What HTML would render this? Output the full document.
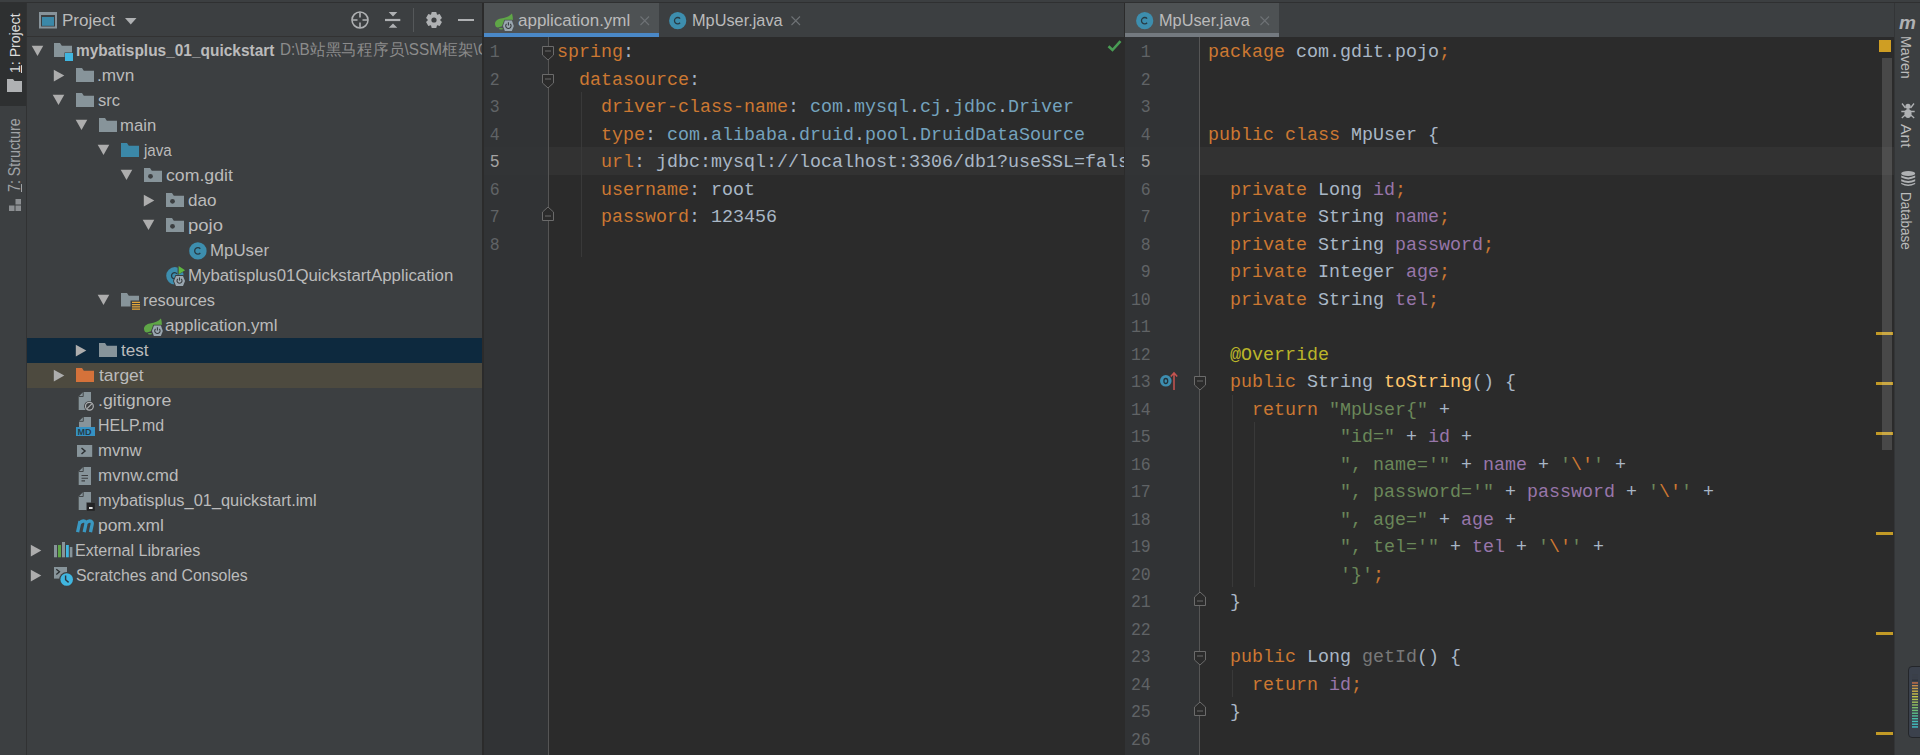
<!DOCTYPE html><html><head><meta charset="utf-8"><style>
*{margin:0;padding:0;box-sizing:border-box}
html,body{width:1920px;height:755px;overflow:hidden;background:#3c3f41}
body{position:relative;font-family:"Liberation Sans",sans-serif}
.abs{position:absolute}
svg{position:absolute;overflow:visible}
.lbl{position:absolute;font-family:"Liberation Sans",sans-serif;font-size:16px;color:#bbbbbb;white-space:pre;line-height:25px;height:25px;transform-origin:0 0}
.code{position:absolute;font-family:"Liberation Mono",monospace;font-size:18.33px;white-space:pre;line-height:27.5px;color:#a9b7c6}
.lnum{position:absolute;font-family:"Liberation Mono",monospace;font-size:18.33px;white-space:pre;line-height:27.5px;color:#606366;text-align:right;transform-origin:100% 0;transform:scaleX(0.9)}
.k{color:#cc7832}.d{color:#a9b7c6}.s{color:#6a8759}.f{color:#9876aa}.a{color:#bbb529}.m{color:#ffc66d}.g{color:#787878}.b{color:#74a2bd}
</style></head><body>
<div class="abs" style="left:0px;top:2px;width:1920px;height:1px;background:#2f3031;"></div>
<div class="abs" style="left:0px;top:3px;width:26px;height:103px;background:#2e3031;"></div>
<div class="abs" style="left:26px;top:3px;width:1px;height:752px;background:#313233;"></div>
<div class="abs" style="left:27px;top:36px;width:455px;height:1px;background:#323232;"></div>
<div class="abs" style="left:482px;top:3px;width:2px;height:752px;background:#2b2b2b;"></div>
<div class="abs" style="left:484px;top:3px;width:640px;height:34px;background:#3c3f41;"></div>
<div class="abs" style="left:484px;top:37px;width:640px;height:718px;background:#2b2b2b;"></div>
<div class="abs" style="left:484px;top:37px;width:64px;height:718px;background:#313335;"></div>
<div class="abs" style="left:1124px;top:3px;width:1px;height:752px;background:#2b2b2b;"></div>
<div class="abs" style="left:1125px;top:3px;width:769px;height:34px;background:#3c3f41;"></div>
<div class="abs" style="left:1125px;top:37px;width:769px;height:718px;background:#2b2b2b;"></div>
<div class="abs" style="left:1125px;top:37px;width:74px;height:718px;background:#313335;"></div>
<div class="abs" style="left:1894px;top:3px;width:1px;height:752px;background:#333537;"></div>
<div class="abs" style="left:7px;top:12px;transform-origin:0 0;transform:rotate(-90deg) translateX(-61px) scaleX(0.94);font-size:15px;color:#dcdcdc;white-space:pre;line-height:15px"><u style="text-decoration-thickness:1px;text-underline-offset:1px">1</u>: Project</div>
<svg style="left:7px;top:79px" width="15" height="13"><path d="M0 0H6L7.5 2H15V13H0Z" fill="#afb1b3"/></svg>
<div class="abs" style="left:7px;top:111px;transform-origin:0 0;transform:rotate(-90deg) translateX(-81px) scaleX(0.89);font-size:16px;color:#a0a3a6;white-space:pre;line-height:15px"><u style="text-decoration-thickness:1px;text-underline-offset:1px">7</u>: Structure</div>
<svg style="left:8.7px;top:199px" width="13" height="13"><rect x="6.5" y="0" width="5.5" height="5.5" fill="#8c8f92"/><rect x="0" y="6.5" width="5.5" height="5.5" fill="#8c8f92"/><rect x="6.5" y="6.5" width="5.5" height="5.5" fill="#8c8f92"/></svg>
<svg style="left:39px;top:12px" width="18" height="17"><rect x="0" y="0" width="18" height="16.5" fill="#87939a"/><rect x="2" y="3" width="14" height="11.5" fill="#3c3f41"/><rect x="3" y="5" width="12" height="8.8" fill="#3b88a8"/></svg>
<div class="lbl" id="L_proj" style="left:62.25px;top:8px;color:#bbbbbb;font-weight:normal;font-size:15.5px;transform-origin:0 18px;transform:scale(1.0960,1.09)">Project</div>
<svg style="left:125px;top:18px" width="12" height="7"><path d="M0 0H11.5L5.75 6.6Z" fill="#afb1b3"/></svg>
<svg style="left:351px;top:11px" width="18" height="18"><circle cx="9" cy="9" r="8" fill="none" stroke="#afb1b3" stroke-width="1.6"/><path d="M9 1.5V6.5M9 11.5V16.5M1.5 9H6.5M11.5 9H16.5" stroke="#afb1b3" stroke-width="1.6"/></svg>
<svg style="left:385px;top:12px" width="16" height="16"><path d="M3.7 0H12.3L8 4.5Z M3.7 15.8H12.3L8 11.4Z" fill="#afb1b3"/><rect x="0" y="6.9" width="15.3" height="2.2" fill="#afb1b3"/></svg>
<div class="abs" style="left:413px;top:8px;width:1px;height:24px;background:#55585a;"></div>
<svg style="left:425px;top:11px" width="18" height="18"><path d="M6.03 3.56 L6.73 1.12 L11.27 1.12 L11.97 3.56 L12.23 3.71 L14.69 3.10 L16.96 7.02 L15.20 8.85 L15.20 9.15 L16.96 10.98 L14.69 14.90 L12.23 14.29 L11.97 14.44 L11.27 16.88 L6.73 16.88 L6.03 14.44 L5.77 14.29 L3.31 14.90 L1.04 10.98 L2.80 9.15 L2.80 8.85 L1.04 7.02 L3.31 3.10 L5.77 3.71Z" fill="#afb1b3"/><circle cx="9" cy="9" r="2.6" fill="#3c3f41"/></svg>
<div class="abs" style="left:458px;top:19px;width:16px;height:2px;background:#afb1b3;"></div>
<div class="abs" style="left:27px;top:338px;width:455px;height:25px;background:#0d293e;"></div>
<div class="abs" style="left:27px;top:363px;width:455px;height:25px;background:#4d4a3f;"></div>
<svg style="left:31.5px;top:45.5px" width="13" height="11"><path d="M-0.3 -0.2H11.3L5.5 10Z" fill="#adadad"/></svg>
<svg style="left:54px;top:43px" width="20" height="19"><path d="M0 0H6L7.8 2.8H18V14H0Z" fill="#87949a"/><rect x="10.5" y="9.5" width="9" height="9" fill="#3c3f41"/><rect x="11" y="10" width="8" height="8" fill="#40b6e0"/></svg>
<div class="lbl" id="L_root" style="left:75.50px;top:38px;color:#bbbbbb;font-weight:bold;font-size:15.5px;transform-origin:0 18px;transform:scale(0.9970,1.09)">mybatisplus_01_quickstart</div>
<div class="abs" style="left:0;top:0;width:482px;height:100px;overflow:hidden">
<div class="lbl" id="L_path" style="left:279.72px;top:38px;color:#8c8c8c;font-weight:normal;font-size:14.5px;transform-origin:0 18px;transform:scale(1.0535,1.09)">D:\B站黑马程序员\SSM框架\Code</div>
</div>
<svg style="left:54.0px;top:69.5px" width="12" height="13"><path d="M-0.2 -0.3L10.3 5.6L-0.2 11.6Z" fill="#adadad"/></svg>
<svg style="left:76.3px;top:67.9px" width="18" height="14"><path d="M0 0H6L7.8 2.8H18V14H0Z" fill="#87949a"/></svg>
<div class="lbl" id="L_mvn" style="left:97.46px;top:63px;color:#bbbbbb;font-weight:normal;font-size:15.5px;transform-origin:0 18px;transform:scale(1.1093,1.09)">.mvn</div>
<svg style="left:53.2px;top:95px" width="13" height="11"><path d="M-0.3 -0.2H11.3L5.5 10Z" fill="#adadad"/></svg>
<svg style="left:76.3px;top:92.9px" width="18" height="14"><path d="M0 0H6L7.8 2.8H18V14H0Z" fill="#87949a"/></svg>
<div class="lbl" id="L_src" style="left:98.29px;top:88px;color:#bbbbbb;font-weight:normal;font-size:15.5px;transform-origin:0 18px;transform:scale(1.0689,1.09)">src</div>
<svg style="left:75.7px;top:120px" width="13" height="11"><path d="M-0.3 -0.2H11.3L5.5 10Z" fill="#adadad"/></svg>
<svg style="left:98.8px;top:117.9px" width="18" height="14"><path d="M0 0H6L7.8 2.8H18V14H0Z" fill="#87949a"/></svg>
<div class="lbl" id="L_main" style="left:120.42px;top:113px;color:#bbbbbb;font-weight:normal;font-size:15.5px;transform-origin:0 18px;transform:scale(1.0766,1.09)">main</div>
<svg style="left:98.2px;top:145px" width="13" height="11"><path d="M-0.3 -0.2H11.3L5.5 10Z" fill="#adadad"/></svg>
<svg style="left:121.3px;top:142.9px" width="18" height="14"><path d="M0 0H6L7.8 2.8H18V14H0Z" fill="#3b88a8"/></svg>
<div class="lbl" id="L_java" style="left:144.41px;top:138px;color:#bbbbbb;font-weight:normal;font-size:15.5px;transform-origin:0 18px;transform:scale(0.9778,1.09)">java</div>
<svg style="left:120.7px;top:170px" width="13" height="11"><path d="M-0.3 -0.2H11.3L5.5 10Z" fill="#adadad"/></svg>
<svg style="left:143.8px;top:167.9px" width="18" height="14"><path d="M0 0H6L7.8 2.8H18V14H0Z" fill="#87949a"/><circle cx="6.5" cy="8.3" r="2.4" fill="#3c3f41"/></svg>
<div class="lbl" id="L_comgdit" style="left:165.68px;top:163px;color:#bbbbbb;font-weight:normal;font-size:15.5px;transform-origin:0 18px;transform:scale(1.1402,1.09)">com.gdit</div>
<svg style="left:144.0px;top:194.5px" width="12" height="13"><path d="M-0.2 -0.3L10.3 5.6L-0.2 11.6Z" fill="#adadad"/></svg>
<svg style="left:166.3px;top:192.9px" width="18" height="14"><path d="M0 0H6L7.8 2.8H18V14H0Z" fill="#87949a"/><circle cx="6.5" cy="8.3" r="2.4" fill="#3c3f41"/></svg>
<div class="lbl" id="L_dao" style="left:188.30px;top:188px;color:#bbbbbb;font-weight:normal;font-size:15.5px;transform-origin:0 18px;transform:scale(1.1011,1.09)">dao</div>
<svg style="left:143.2px;top:220px" width="13" height="11"><path d="M-0.3 -0.2H11.3L5.5 10Z" fill="#adadad"/></svg>
<svg style="left:166.3px;top:217.9px" width="18" height="14"><path d="M0 0H6L7.8 2.8H18V14H0Z" fill="#87949a"/><circle cx="6.5" cy="8.3" r="2.4" fill="#3c3f41"/></svg>
<div class="lbl" id="L_pojo" style="left:187.66px;top:213px;color:#bbbbbb;font-weight:normal;font-size:15.5px;transform-origin:0 18px;transform:scale(1.1923,1.09)">pojo</div>
<svg style="left:189px;top:242px" width="18" height="18"><circle cx="8.9" cy="8.9" r="8.7" fill="#3d8eae"/><path d="M11.3 6.8A3.2 3.2 0 1 0 11.3 11" fill="none" stroke="#283b44" stroke-width="1.3"/></svg>
<div class="lbl" id="L_mpuser" style="left:209.91px;top:238px;color:#bbbbbb;font-weight:normal;font-size:15.5px;transform-origin:0 18px;transform:scale(1.0876,1.09)">MpUser</div>
<svg style="left:166px;top:266px" width="22" height="22"><circle cx="8.9" cy="9.8" r="8.7" fill="#3d8eae"/><path d="M11 7.8A3.1 3.1 0 1 0 11 11.8" fill="none" stroke="#283b44" stroke-width="1.3"/><path d="M11.6 -0.6L20.2 4.15L11.6 8.9Z" fill="#3c3f41"/><path d="M12.6 0L19.1 4.15L12.6 8.3Z" fill="#5fb641"/><path d="M7 15L9.4 9H17.6L20 15L17.6 21H9.4Z" fill="#3c3f41"/><path d="M8 15L10 10H17L19 15L17 20H10Z" fill="#9aa7b0"/><path d="M11.8 12.9A2.5 2.5 0 1 0 15.2 12.9" fill="none" stroke="#3a3d40" stroke-width="1.1"/><path d="M13.5 11.4V14.6" stroke="#3a3d40" stroke-width="1.1"/></svg>
<div class="lbl" id="L_app" style="left:188.18px;top:263px;color:#bbbbbb;font-weight:normal;font-size:15.5px;transform-origin:0 18px;transform:scale(1.0841,1.09)">Mybatisplus01QuickstartApplication</div>
<svg style="left:98.2px;top:295px" width="13" height="11"><path d="M-0.3 -0.2H11.3L5.5 10Z" fill="#adadad"/></svg>
<svg style="left:121px;top:293.4px" width="20" height="19"><path d="M0 0H6L7.8 2.8H18V13.4H0Z" fill="#87949a"/><rect x="9.5" y="7.5" width="10" height="11" fill="#3c3f41"/><path d="M11 9.3H19M11 11.6H19M11 13.9H19M11 16.2H19" stroke="#e5a83b" stroke-width="1.3"/></svg>
<div class="lbl" id="L_resources" style="left:143.13px;top:288px;color:#bbbbbb;font-weight:normal;font-size:15.5px;transform-origin:0 18px;transform:scale(1.0570,1.09)">resources</div>
<svg style="left:138.8px;top:315.4px" width="26" height="24"><path d="M21.9 3.5C19 6.5 16 7.6 11 8.4C7 9 4.8 11.5 5 14C5.2 16.5 6.5 17.6 8 17.5L13 16L22.9 9.9C22.9 7.5 22.5 5 21.9 3.5Z" fill="#5fa647"/><ellipse cx="11" cy="18.7" rx="2.2" ry="0.8" fill="#5fa647"/><path d="M12 15.9L14.3 9.8H22.5L24.8 15.9L22.5 21.8H14.3Z" fill="#3c3f41"/><path d="M13 15.9L14.9 10.6H21.9L23.8 15.9L21.9 21H14.9Z" fill="#9aa7b0"/><path d="M16.6 13.8A2.7 2.7 0 1 0 20.2 13.8" fill="none" stroke="#3a3d40" stroke-width="1.1"/><path d="M18.4 12.2V15.6" stroke="#3a3d40" stroke-width="1.1"/></svg>
<div class="lbl" id="L_appyml" style="left:165.31px;top:313px;color:#bbbbbb;font-weight:normal;font-size:15.5px;transform-origin:0 18px;transform:scale(1.0978,1.09)">application.yml</div>
<svg style="left:75.8px;top:344.5px" width="12" height="13"><path d="M-0.2 -0.3L10.3 5.6L-0.2 11.6Z" fill="#adadad"/></svg>
<svg style="left:98.8px;top:342.9px" width="18" height="14"><path d="M0 0H6L7.8 2.8H18V14H0Z" fill="#87949a"/></svg>
<div class="lbl" id="L_test" style="left:121.03px;top:338px;color:#bbbbbb;font-weight:normal;font-size:15.5px;transform-origin:0 18px;transform:scale(1.1059,1.09)">test</div>
<svg style="left:54px;top:369.5px" width="12" height="13"><path d="M-0.2 -0.3L10.3 5.6L-0.2 11.6Z" fill="#adadad"/></svg>
<svg style="left:75.8px;top:367.9px" width="18" height="14"><path d="M0 0H6L7.8 2.8H18V14H0Z" fill="#d5723a"/></svg>
<div class="lbl" id="L_target" style="left:99.02px;top:363px;color:#bbbbbb;font-weight:normal;font-size:15.5px;transform-origin:0 18px;transform:scale(1.1269,1.09)">target</div>
<svg style="left:78px;top:392px" width="18" height="20"><path d="M5.2 0H13.0V18H0.7V4.5Z" fill="#87949a"/><path d="M5.2 0V4.5H0.7" fill="none" stroke="#3c3f41" stroke-width="0.9"/><circle cx="11.4" cy="14.2" r="5.3" fill="#3c3f41"/><circle cx="11.4" cy="14.2" r="3.9" fill="none" stroke="#afb1b3" stroke-width="1.2"/><path d="M9 16.6L13.8 11.8" stroke="#afb1b3" stroke-width="1.2"/></svg>
<div class="lbl" id="L_gitignore" style="left:97.66px;top:388px;color:#bbbbbb;font-weight:normal;font-size:15.5px;transform-origin:0 18px;transform:scale(1.1493,1.09)">.gitignore</div>
<svg style="left:76px;top:416.5px" width="20" height="20"><path d="M7.3 0H15V10H3V4.3Z" fill="#87949a"/><path d="M7.3 0V4.3H3" fill="none" stroke="#3c3f41" stroke-width="0.9"/><rect x="0" y="10" width="19" height="9" fill="#3592c4"/><text x="1.5" y="17.6" font-family="Liberation Sans" font-size="9" font-weight="bold" fill="#263b48">MD</text></svg>
<div class="lbl" id="L_help" style="left:97.98px;top:413px;color:#bbbbbb;font-weight:normal;font-size:15.5px;transform-origin:0 18px;transform:scale(1.0276,1.09)">HELP.md</div>
<svg style="left:77.4px;top:444.8px" width="16" height="13"><rect x="0" y="0" width="15.2" height="11.9" fill="#87949a"/><path d="M4.5 3L8 6L4.5 9" fill="none" stroke="#2b2f31" stroke-width="1.5"/></svg>
<div class="lbl" id="L_mvnw" style="left:98.11px;top:438px;color:#bbbbbb;font-weight:normal;font-size:15.5px;transform-origin:0 18px;transform:scale(1.0797,1.09)">mvnw</div>
<svg style="left:78px;top:467px" width="16" height="20"><path d="M5.2 0H13.0V18H0.7V4.5Z" fill="#87949a"/><path d="M5.2 0V4.5H0.7" fill="none" stroke="#3c3f41" stroke-width="0.9"/><path d="M3.5 8.5H10M3.5 11.2H10M3.5 13.9H7" stroke="#3c3f41" stroke-width="1.1"/></svg>
<div class="lbl" id="L_mvnwcmd" style="left:98.09px;top:463px;color:#bbbbbb;font-weight:normal;font-size:15.5px;transform-origin:0 18px;transform:scale(1.0977,1.09)">mvnw.cmd</div>
<svg style="left:78px;top:491.8px" width="18" height="20"><path d="M5.2 0H13.0V18H0.7V4.5Z" fill="#87949a"/><path d="M5.2 0V4.5H0.7" fill="none" stroke="#3c3f41" stroke-width="0.9"/><rect x="8.4" y="10.4" width="8.4" height="8.4" fill="#3c3f41"/><rect x="9" y="11" width="7.8" height="7.8" fill="#232425"/><rect x="11" y="15" width="3.6" height="2" fill="#dddddd"/></svg>
<div class="lbl" id="L_iml" style="left:98.13px;top:488px;color:#bbbbbb;font-weight:normal;font-size:15.5px;transform-origin:0 18px;transform:scale(1.0575,1.09)">mybatisplus_01_quickstart.iml</div>
<svg style="left:76.3px;top:520.1px" width="20" height="14"><path d="M1.6 12.2L4 1M3.6 3.2Q6 0.2 8.9 1.3Q10.4 2.2 9.8 4.6L8.2 12.2M9.9 3.2Q12.3 0.2 15.2 1.3Q16.7 2.2 16.1 4.6L14.5 12.2" fill="none" stroke="#3a98c2" stroke-width="3.3"/></svg>
<div class="lbl" id="L_pom" style="left:98.08px;top:513px;color:#bbbbbb;font-weight:normal;font-size:15.5px;transform-origin:0 18px;transform:scale(1.1235,1.09)">pom.xml</div>
<svg style="left:31px;top:544.5px" width="12" height="13"><path d="M-0.2 -0.3L10.3 5.6L-0.2 11.6Z" fill="#adadad"/></svg>
<svg style="left:54px;top:542px" width="19" height="16"><rect x="0" y="3" width="3" height="12.3" fill="#87949a"/><rect x="4" y="3" width="3" height="12.3" fill="#5fa647"/><rect x="8" y="0" width="3" height="15.3" fill="#87949a"/><rect x="12" y="3" width="2.8" height="12.3" fill="#40b6e0"/><rect x="15.8" y="5" width="2.6" height="10.3" fill="#87949a"/></svg>
<div class="lbl" id="L_extlib" style="left:75.23px;top:538px;color:#bbbbbb;font-weight:normal;font-size:15.5px;transform-origin:0 18px;transform:scale(1.0390,1.09)">External Libraries</div>
<svg style="left:31px;top:569.5px" width="12" height="13"><path d="M-0.2 -0.3L10.3 5.6L-0.2 11.6Z" fill="#adadad"/></svg>
<svg style="left:54px;top:567px" width="20" height="20"><rect x="0" y="0" width="13" height="11.6" fill="#87949a"/><path d="M2.3 2.2L5.5 4.8L2.3 7.4" fill="none" stroke="#2b2f31" stroke-width="1.3"/><circle cx="12.7" cy="12.5" r="7.5" fill="#3c3f41"/><circle cx="12.7" cy="12.5" r="6.3" fill="#40b6e0"/><path d="M11.6 8.6V12.8L14.6 15.4" fill="none" stroke="#2b3640" stroke-width="1.4"/></svg>
<div class="lbl" id="L_scratch" style="left:75.59px;top:563px;color:#bbbbbb;font-weight:normal;font-size:15.5px;transform-origin:0 18px;transform:scale(1.0216,1.09)">Scratches and Consoles</div>
<div class="abs" style="left:484px;top:3px;width:175px;height:30px;background:#4e5254;"></div>
<div class="abs" style="left:484px;top:33px;width:175px;height:4px;background:#4a88c7;"></div>
<svg style="left:490px;top:10px" width="26" height="24"><path d="M21.9 3.5C19 6.5 16 7.6 11 8.4C7 9 4.8 11.5 5 14C5.2 16.5 6.5 17.6 8 17.5L13 16L22.9 9.9C22.9 7.5 22.5 5 21.9 3.5Z" fill="#5fa647"/><ellipse cx="11" cy="18.7" rx="2.2" ry="0.8" fill="#5fa647"/><path d="M12 15.9L14.3 9.8H22.5L24.8 15.9L22.5 21.8H14.3Z" fill="#4e5254"/><path d="M13 15.9L14.9 10.6H21.9L23.8 15.9L21.9 21H14.9Z" fill="#9aa7b0"/><path d="M16.6 13.8A2.7 2.7 0 1 0 20.2 13.8" fill="none" stroke="#3a3d40" stroke-width="1.1"/><path d="M18.4 12.2V15.6" stroke="#3a3d40" stroke-width="1.1"/></svg>
<div class="lbl" id="L_tab_yml" style="left:518.41px;top:8px;color:#bbbbbb;font-weight:normal;font-size:15.5px;transform-origin:0 18px;transform:scale(1.0948,1.09)">application.yml</div>
<svg style="left:640px;top:15.5px" width="10" height="10"><path d="M0.5 0.5L9 9M9 0.5L0.5 9" stroke="#6e7275" stroke-width="1.1"/></svg>
<svg style="left:669px;top:12.3px" width="18" height="18"><circle cx="8.7" cy="8.7" r="8.6" fill="#3d8eae"/><path d="M11.1 6.6A3.2 3.2 0 1 0 11.1 10.8" fill="none" stroke="#283b44" stroke-width="1.3"/></svg>
<div class="lbl" id="L_tab_mp1" style="left:692.22px;top:8px;color:#bbbbbb;font-weight:normal;font-size:15.5px;transform-origin:0 18px;transform:scale(1.0522,1.09)">MpUser.java</div>
<svg style="left:791px;top:15.5px" width="10" height="10"><path d="M0.5 0.5L9 9M9 0.5L0.5 9" stroke="#6e7275" stroke-width="1.1"/></svg>
<svg style="left:1107px;top:39px" width="16" height="14"><path d="M1.5 7.2L5.5 11L13.5 2.2" fill="none" stroke="#499c54" stroke-width="2.6"/></svg>
<div class="abs" style="left:1125px;top:3px;width:154px;height:30px;background:#4e5254;"></div>
<div class="abs" style="left:1125px;top:33px;width:154px;height:4px;background:#747a80;"></div>
<svg style="left:1136.4px;top:12.3px" width="18" height="18"><circle cx="8.7" cy="8.7" r="8.6" fill="#3d8eae"/><path d="M11.1 6.6A3.2 3.2 0 1 0 11.1 10.8" fill="none" stroke="#283b44" stroke-width="1.3"/></svg>
<div class="lbl" id="L_tab_mp2" style="left:1159.05px;top:8px;color:#bbbbbb;font-weight:normal;font-size:15.5px;transform-origin:0 18px;transform:scale(1.0531,1.09)">MpUser.java</div>
<svg style="left:1260px;top:15.5px" width="10" height="10"><path d="M0.5 0.5L9 9M9 0.5L0.5 9" stroke="#6e7275" stroke-width="1.1"/></svg>
<div class="abs" style="left:484px;top:147.0px;width:64px;height:27.5px;background:#323436;"></div>
<div class="abs" style="left:549px;top:147.0px;width:575px;height:27.5px;background:#323232;"></div>
<div class="abs" style="left:548px;top:37px;width:1px;height:718px;background:#555555;"></div>
<div class="abs" style="left:581px;top:92.0px;width:1px;height:165.0px;background:#393939;"></div>
<div class="abs" style="left:549px;top:37px;width:575px;height:718px;overflow:hidden">
<div class="code" style="left:8px;top:2.2px"><span class="k">spring</span>:</div>
<div class="code" style="left:8px;top:29.7px">  <span class="k">datasource</span>:</div>
<div class="code" style="left:8px;top:57.2px">    <span class="k">driver-class-name</span>: <span class="b">com</span>.<span class="b">mysql</span>.<span class="b">cj</span>.<span class="b">jdbc</span>.<span class="b">Driver</span></div>
<div class="code" style="left:8px;top:84.7px">    <span class="k">type</span>: <span class="b">com</span>.<span class="b">alibaba</span>.<span class="b">druid</span>.<span class="b">pool</span>.<span class="b">DruidDataSource</span></div>
<div class="code" style="left:8px;top:112.2px">    <span class="k">url</span>: jdbc:mysql://localhost:3306/db1?useSSL=false</div>
<div class="code" style="left:8px;top:139.7px">    <span class="k">username</span>: root</div>
<div class="code" style="left:8px;top:167.2px">    <span class="k">password</span>: 123456</div>
<div class="code" style="left:8px;top:194.7px"></div>
</div>
<div class="lnum" style="left:460px;width:39.69999999999999px;top:39.2px;color:#606366">1</div>
<div class="lnum" style="left:460px;width:39.69999999999999px;top:66.7px;color:#606366">2</div>
<div class="lnum" style="left:460px;width:39.69999999999999px;top:94.2px;color:#606366">3</div>
<div class="lnum" style="left:460px;width:39.69999999999999px;top:121.7px;color:#606366">4</div>
<div class="lnum" style="left:460px;width:39.69999999999999px;top:149.2px;color:#a4a3a3">5</div>
<div class="lnum" style="left:460px;width:39.69999999999999px;top:176.7px;color:#606366">6</div>
<div class="lnum" style="left:460px;width:39.69999999999999px;top:204.2px;color:#606366">7</div>
<div class="lnum" style="left:460px;width:39.69999999999999px;top:231.7px;color:#606366">8</div>
<svg style="left:542px;top:46px" width="13" height="15"><path d="M0.5 0.5H11.5V9L6 14L0.5 9Z" fill="#2b2b2b" stroke="#6b6b6b" stroke-width="1"/><path d="M3 5H9" stroke="#6b6b6b" stroke-width="1"/></svg>
<svg style="left:542px;top:73.5px" width="13" height="15"><path d="M0.5 0.5H11.5V9L6 14L0.5 9Z" fill="#2b2b2b" stroke="#6b6b6b" stroke-width="1"/><path d="M3 5H9" stroke="#6b6b6b" stroke-width="1"/></svg>
<svg style="left:542px;top:205.8px" width="13" height="15"><path d="M0.5 14.5H11.5V6L6 1L0.5 6Z" fill="#2b2b2b" stroke="#6b6b6b" stroke-width="1"/><path d="M3 10H9" stroke="#6b6b6b" stroke-width="1"/></svg>
<div class="abs" style="left:1125px;top:147.0px;width:74px;height:27.5px;background:#323436;"></div>
<div class="abs" style="left:1200px;top:147.0px;width:694px;height:27.5px;background:#323232;"></div>
<div class="abs" style="left:1199px;top:37px;width:1px;height:718px;background:#555555;"></div>
<div class="abs" style="left:1232px;top:394.5px;width:1px;height:192.5px;background:#393939;"></div>
<div class="abs" style="left:1254px;top:422.0px;width:1px;height:165.0px;background:#393939;"></div>
<div class="abs" style="left:1232px;top:669.5px;width:1px;height:27.5px;background:#393939;"></div>
<div class="code" style="left:1208px;top:39.2px"><span class="k">package</span> com.gdit.pojo<span class="k">;</span></div>
<div class="code" style="left:1208px;top:66.7px"></div>
<div class="code" style="left:1208px;top:94.2px"></div>
<div class="code" style="left:1208px;top:121.7px"><span class="k">public class</span> MpUser {</div>
<div class="code" style="left:1208px;top:149.2px"></div>
<div class="code" style="left:1208px;top:176.7px">  <span class="k">private</span> Long <span class="f">id</span><span class="k">;</span></div>
<div class="code" style="left:1208px;top:204.2px">  <span class="k">private</span> String <span class="f">name</span><span class="k">;</span></div>
<div class="code" style="left:1208px;top:231.7px">  <span class="k">private</span> String <span class="f">password</span><span class="k">;</span></div>
<div class="code" style="left:1208px;top:259.2px">  <span class="k">private</span> Integer <span class="f">age</span><span class="k">;</span></div>
<div class="code" style="left:1208px;top:286.7px">  <span class="k">private</span> String <span class="f">tel</span><span class="k">;</span></div>
<div class="code" style="left:1208px;top:314.2px"></div>
<div class="code" style="left:1208px;top:341.7px">  <span class="a">@Override</span></div>
<div class="code" style="left:1208px;top:369.2px">  <span class="k">public</span> String <span class="m">toString</span>() {</div>
<div class="code" style="left:1208px;top:396.7px">    <span class="k">return</span> <span class="s">"MpUser{"</span> +</div>
<div class="code" style="left:1208px;top:424.2px">            <span class="s">"id="</span> + <span class="f">id</span> +</div>
<div class="code" style="left:1208px;top:451.7px">            <span class="s">", name='"</span> + <span class="f">name</span> + <span class="s">'</span><span class="k">\'</span><span class="s">'</span> +</div>
<div class="code" style="left:1208px;top:479.2px">            <span class="s">", password='"</span> + <span class="f">password</span> + <span class="s">'</span><span class="k">\'</span><span class="s">'</span> +</div>
<div class="code" style="left:1208px;top:506.7px">            <span class="s">", age="</span> + <span class="f">age</span> +</div>
<div class="code" style="left:1208px;top:534.2px">            <span class="s">", tel='"</span> + <span class="f">tel</span> + <span class="s">'</span><span class="k">\'</span><span class="s">'</span> +</div>
<div class="code" style="left:1208px;top:561.7px">            <span class="s">'}'</span><span class="k">;</span></div>
<div class="code" style="left:1208px;top:589.2px">  }</div>
<div class="code" style="left:1208px;top:616.7px"></div>
<div class="code" style="left:1208px;top:644.2px">  <span class="k">public</span> Long <span class="g">getId</span>() {</div>
<div class="code" style="left:1208px;top:671.7px">    <span class="k">return</span> <span class="f">id</span><span class="k">;</span></div>
<div class="code" style="left:1208px;top:699.2px">  }</div>
<div class="code" style="left:1208px;top:726.7px"></div>
<div class="lnum" style="left:1100px;width:50.700000000000045px;top:39.2px;color:#606366">1</div>
<div class="lnum" style="left:1100px;width:50.700000000000045px;top:66.7px;color:#606366">2</div>
<div class="lnum" style="left:1100px;width:50.700000000000045px;top:94.2px;color:#606366">3</div>
<div class="lnum" style="left:1100px;width:50.700000000000045px;top:121.7px;color:#606366">4</div>
<div class="lnum" style="left:1100px;width:50.700000000000045px;top:149.2px;color:#a4a3a3">5</div>
<div class="lnum" style="left:1100px;width:50.700000000000045px;top:176.7px;color:#606366">6</div>
<div class="lnum" style="left:1100px;width:50.700000000000045px;top:204.2px;color:#606366">7</div>
<div class="lnum" style="left:1100px;width:50.700000000000045px;top:231.7px;color:#606366">8</div>
<div class="lnum" style="left:1100px;width:50.700000000000045px;top:259.2px;color:#606366">9</div>
<div class="lnum" style="left:1100px;width:50.700000000000045px;top:286.7px;color:#606366">10</div>
<div class="lnum" style="left:1100px;width:50.700000000000045px;top:314.2px;color:#606366">11</div>
<div class="lnum" style="left:1100px;width:50.700000000000045px;top:341.7px;color:#606366">12</div>
<div class="lnum" style="left:1100px;width:50.700000000000045px;top:369.2px;color:#606366">13</div>
<div class="lnum" style="left:1100px;width:50.700000000000045px;top:396.7px;color:#606366">14</div>
<div class="lnum" style="left:1100px;width:50.700000000000045px;top:424.2px;color:#606366">15</div>
<div class="lnum" style="left:1100px;width:50.700000000000045px;top:451.7px;color:#606366">16</div>
<div class="lnum" style="left:1100px;width:50.700000000000045px;top:479.2px;color:#606366">17</div>
<div class="lnum" style="left:1100px;width:50.700000000000045px;top:506.7px;color:#606366">18</div>
<div class="lnum" style="left:1100px;width:50.700000000000045px;top:534.2px;color:#606366">19</div>
<div class="lnum" style="left:1100px;width:50.700000000000045px;top:561.7px;color:#606366">20</div>
<div class="lnum" style="left:1100px;width:50.700000000000045px;top:589.2px;color:#606366">21</div>
<div class="lnum" style="left:1100px;width:50.700000000000045px;top:616.7px;color:#606366">22</div>
<div class="lnum" style="left:1100px;width:50.700000000000045px;top:644.2px;color:#606366">23</div>
<div class="lnum" style="left:1100px;width:50.700000000000045px;top:671.7px;color:#606366">24</div>
<div class="lnum" style="left:1100px;width:50.700000000000045px;top:699.2px;color:#606366">25</div>
<div class="lnum" style="left:1100px;width:50.700000000000045px;top:726.7px;color:#606366">26</div>
<svg style="left:1193.5px;top:376px" width="13" height="15"><path d="M0.5 0.5H11.5V9L6 14L0.5 9Z" fill="#2b2b2b" stroke="#6b6b6b" stroke-width="1"/><path d="M3 5H9" stroke="#6b6b6b" stroke-width="1"/></svg>
<svg style="left:1193.5px;top:591.3px" width="13" height="15"><path d="M0.5 14.5H11.5V6L6 1L0.5 6Z" fill="#2b2b2b" stroke="#6b6b6b" stroke-width="1"/><path d="M3 10H9" stroke="#6b6b6b" stroke-width="1"/></svg>
<svg style="left:1193.5px;top:651px" width="13" height="15"><path d="M0.5 0.5H11.5V9L6 14L0.5 9Z" fill="#2b2b2b" stroke="#6b6b6b" stroke-width="1"/><path d="M3 5H9" stroke="#6b6b6b" stroke-width="1"/></svg>
<svg style="left:1193.5px;top:700.7px" width="13" height="15"><path d="M0.5 14.5H11.5V6L6 1L0.5 6Z" fill="#2b2b2b" stroke="#6b6b6b" stroke-width="1"/><path d="M3 10H9" stroke="#6b6b6b" stroke-width="1"/></svg>
<svg style="left:1159px;top:371px" width="22" height="20"><circle cx="6.8" cy="9.8" r="5.8" fill="#3d8eb0"/><ellipse cx="6.8" cy="10" rx="1.9" ry="2.5" fill="none" stroke="#24333a" stroke-width="1.3"/><path d="M15 19V2M11.8 5.5L15 1.8L18.2 5.5" fill="none" stroke="#c75450" stroke-width="1.5"/></svg>
<div class="abs" style="left:1879px;top:40px;width:12px;height:12px;background:#cf9e23;"></div>
<div class="abs" style="left:1876px;top:332px;width:17px;height:3px;background:#c29a26;"></div>
<div class="abs" style="left:1876px;top:382px;width:17px;height:3px;background:#c29a26;"></div>
<div class="abs" style="left:1876px;top:432px;width:17px;height:3px;background:#c29a26;"></div>
<div class="abs" style="left:1876px;top:532px;width:17px;height:3px;background:#c29a26;"></div>
<div class="abs" style="left:1876px;top:632px;width:17px;height:3px;background:#c29a26;"></div>
<div class="abs" style="left:1876px;top:732px;width:17px;height:3px;background:#c29a26;"></div>
<div class="abs" style="left:1882px;top:58px;width:10px;height:392px;background:rgba(255,255,255,0.14);"></div>
<div class="abs" style="left:1899px;top:15px;font-family:'Liberation Sans';font-size:19px;font-weight:bold;font-style:italic;color:#afb1b3;line-height:16px">m</div>
<div class="abs" style="left:1899px;top:36px;transform-origin:0 0;transform:rotate(90deg) translateY(-14px) scaleX(0.9500);font-size:15px;color:#bbbbbb;white-space:pre;line-height:14px">Maven</div>
<svg style="left:1901px;top:103px" width="15" height="16"><circle cx="7" cy="3.3" r="2.6" fill="#afb1b3"/><ellipse cx="7" cy="10.5" rx="3.6" ry="4.6" fill="#afb1b3"/><path d="M1 0.5L4.5 5M13 0.5L9.5 5M0.3 8.5H4M13.7 8.5H10M0.8 15L4.2 12M13.2 15L9.8 12" stroke="#afb1b3" stroke-width="1.3"/></svg>
<div class="abs" style="left:1899px;top:124.3px;transform-origin:0 0;transform:rotate(90deg) translateY(-14px) scaleX(1.0500);font-size:15px;color:#bbbbbb;white-space:pre;line-height:14px">Ant</div>
<svg style="left:1901px;top:171px" width="15" height="16"><ellipse cx="7.2" cy="2.6" rx="7" ry="2.5" fill="#afb1b3"/><path d="M0.2 4.6Q7.2 8.2 14.2 4.6V6.6Q7.2 10.2 0.2 6.6Z M0.2 8.2Q7.2 11.8 14.2 8.2V10.2Q7.2 13.8 0.2 10.2Z M0.2 11.8Q7.2 15.4 14.2 11.8V13Q7.2 17 0.2 13Z" fill="#afb1b3"/></svg>
<div class="abs" style="left:1899px;top:191.5px;transform-origin:0 0;transform:rotate(90deg) translateY(-14px) scaleX(0.9000);font-size:15px;color:#bbbbbb;white-space:pre;line-height:14px">Database</div>
<div class="abs" style="left:1907.5px;top:666px;width:16px;height:72px;border:1px solid #24262a;border-radius:4px;background:#3b414c"></div>
<svg style="left:1911.5px;top:674px" width="7" height="60"><rect x="0" y="0.00" width="6" height="1.4" fill="#3a3f48"/><rect x="0" y="2.75" width="6" height="1.4" fill="#3a3f48"/><rect x="0" y="5.50" width="6" height="1.4" fill="#2f333a"/><rect x="0" y="8.25" width="6" height="1.4" fill="#c8714a"/><rect x="0" y="11.00" width="6" height="1.4" fill="#c98a48"/><rect x="0" y="13.75" width="6" height="1.4" fill="#c9a048"/><rect x="0" y="16.50" width="6" height="1.4" fill="#c9b048"/><rect x="0" y="19.25" width="6" height="1.4" fill="#c9c048"/><rect x="0" y="22.00" width="6" height="1.4" fill="#c2c548"/><rect x="0" y="24.75" width="6" height="1.4" fill="#b0c450"/><rect x="0" y="27.50" width="6" height="1.4" fill="#a0c058"/><rect x="0" y="30.25" width="6" height="1.4" fill="#8ebf60"/><rect x="0" y="33.00" width="6" height="1.4" fill="#7cbf6a"/><rect x="0" y="35.75" width="6" height="1.4" fill="#6cc078"/><rect x="0" y="38.50" width="6" height="1.4" fill="#5cc088"/><rect x="0" y="41.25" width="6" height="1.4" fill="#50c098"/><rect x="0" y="44.00" width="6" height="1.4" fill="#48c0a8"/><rect x="0" y="46.75" width="6" height="1.4" fill="#44c0b8"/><rect x="0" y="49.50" width="6" height="1.4" fill="#42c0c0"/><rect x="0" y="52.25" width="6" height="1.4" fill="#40c0c8"/></svg>
</body></html>
